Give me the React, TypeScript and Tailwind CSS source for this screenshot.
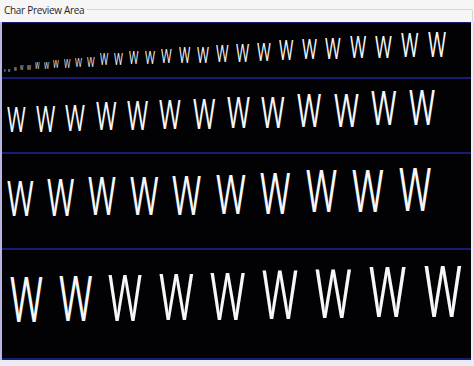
import React from 'react';

// each glyph is one size step bigger than the one before it
const STEP = 0.82;

const rows = [
  { from: 0, to: 28, className: 'h-[56px] pl-[2px] pb-[3px] border-b-2 border-[#1b1b74]' },
  { from: 28, to: 41, className: 'h-[75px] pl-[5px] pb-[2px] border-b-2 border-[#1b1b74]' },
  { from: 41, to: 51, className: 'h-[96px] pl-[5px] pb-[6px] border-b-2 border-[#1b1b74]' },
  { from: 51, to: 60, className: 'h-[108px] pl-[8px] pb-[5px]' },
];

const Glyph: React.FC<{ index: number }> = ({ index }) => {
  const cap = 2 + STEP * index;
  return (
    <div className="flex-shrink-0 flex items-end" style={{ width: 2.3 + 1.06 * cap }}>
      <span
        className="inline-block w-max flex-shrink-0 origin-bottom-left scale-x-[0.58] text-[#f7f7f7] leading-[0.776] font-['Open_Sans',sans-serif]"
        style={{ fontSize: cap / 0.714, paddingBottom: 0.7 * cap }}
      >
        W
      </span>
    </div>
  );
};

const App: React.FC = () => {
  return (
    <div className="w-[474px] h-[366px] bg-[#f0f0f0] overflow-hidden flex flex-col font-['Open_Sans',sans-serif]">
      {/* Group box header */}
      <div className="h-[22px] flex items-start pl-[4px] pr-[1px] bg-[#f6f6f6]">
        <span className="mt-[5px] text-[10px] leading-none text-[#1e1e1e] tracking-[-0.3px]">Char Preview Area</span>
        <div className="flex-1 ml-[3px] mt-[9px] h-[13px] border-t border-r border-[#d6d6d6] rounded-tr-[2px]" />
      </div>

      {/* Preview panel */}
      <div className="flex border-l-2 border-[#b7b7e2]">
        <div className="w-[469px] bg-[#020205] border-t border-b-2 border-[#1b1b74] flex flex-col">
          {rows.map((row, r) => (
            <div key={r} className={`flex items-end ${row.className}`}>
              {Array.from({ length: row.to - row.from }, (_, k) => (
                <Glyph key={k} index={row.from + k} />
              ))}
            </div>
          ))}
        </div>
        <div className="flex-1 border-r border-[#d6d6d6] bg-[#ececf4]" />
      </div>

      <div className="flex-1 bg-[#ececf5]" />
    </div>
  );
};

export default App;
